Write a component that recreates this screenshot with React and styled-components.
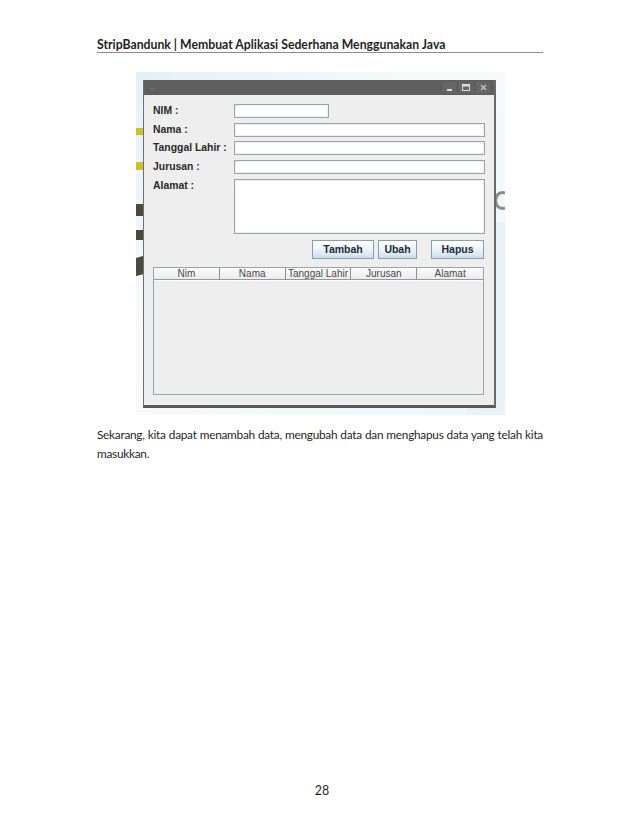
import React from 'react';
import styled, { createGlobalStyle } from 'styled-components';

const GlobalStyle = createGlobalStyle`
    html, body {
        margin: 0;
        padding: 0;
        background: #ffffff;
    }
`;

const PAGE = {
    header: 'StripBandunk | Membuat Aplikasi Sederhana Menggunakan Java',
    body: [
        'Sekarang, kita dapat menambah data, mengubah data dan menghapus data yang telah kita',
        'masukkan.',
    ],
    pageNumber: '28',
};

const FIELDS = [
    { label: 'NIM :', width: '95px' },
    { label: 'Nama :' },
    { label: 'Tanggal Lahir :' },
    { label: 'Jurusan :' },
];

const BUTTONS = [
    { label: 'Tambah', width: '62px', gap: '0' },
    { label: 'Ubah', width: '39px', gap: '4px' },
    { label: 'Hapus', width: '53px', gap: '14px' },
];

const COLUMNS = ['Nim', 'Nama', 'Tanggal Lahir', 'Jurusan', 'Alamat'];

export default function App() {
    return (
        <>
            <GlobalStyle />
            <Page>
                <Header>{PAGE.header}</Header>
                <Figure>
                    <Backdrop />
                    <Window>
                        <TitleBar>
                            <TitleGlyph>–</TitleGlyph>
                            <Controls>
                                <Control>
                                    <svg width="7" height="7" viewBox="0 0 7 7">
                                        <rect x="1" y="5" width="5" height="2" fill="#dcdcdc" />
                                    </svg>
                                </Control>
                                <Control>
                                    <svg width="8" height="7" viewBox="0 0 8 7">
                                        <rect x="0.5" y="0.5" width="7" height="6" fill="none" stroke="#dcdcdc" />
                                        <rect x="0" y="0" width="8" height="2.5" fill="#dcdcdc" />
                                    </svg>
                                </Control>
                                <Control>
                                    <svg width="7" height="7" viewBox="0 0 7 7">
                                        <path d="M1 1 L6 6 M6 1 L1 6" stroke="#c8c8c8" strokeWidth="1.2" />
                                    </svg>
                                </Control>
                            </Controls>
                        </TitleBar>
                        <WindowBody>
                            <Form>
                                {FIELDS.map(field => (
                                    <React.Fragment key={field.label}>
                                        <Label>{field.label}</Label>
                                        <Input $width={field.width} />
                                    </React.Fragment>
                                ))}
                                <Label>Alamat :</Label>
                                <TextArea />
                            </Form>
                            <ButtonRow>
                                {BUTTONS.map(button => (
                                    <Button key={button.label} $width={button.width} $gap={button.gap}>
                                        {button.label}
                                    </Button>
                                ))}
                            </ButtonRow>
                            <Table>
                                <HeaderRow>
                                    {COLUMNS.map(column => (
                                        <HeaderCell key={column}>{column}</HeaderCell>
                                    ))}
                                </HeaderRow>
                                <TableBody />
                            </Table>
                        </WindowBody>
                    </Window>
                </Figure>
                <Paragraph>
                    {PAGE.body.map((line, i) => (
                        <Line key={i} $justify={i < PAGE.body.length - 1}>{line}</Line>
                    ))}
                </Paragraph>
                <Footer>{PAGE.pageNumber}</Footer>
            </Page>
        </>
    );
}

// backdrop of the screenshot: bits of the desktop behind the window
const Backdrop = () => (
    <BackdropSvg viewBox="0 0 369 343" preserveAspectRatio="none">
        <defs>
            <linearGradient id="sky" x1="0" y1="0" x2="1" y2="1">
                <stop offset="0" stopColor="#e4f0f5" />
                <stop offset="0.4" stopColor="#f7fafb" />
                <stop offset="1" stopColor="#eef5f9" />
            </linearGradient>
        </defs>
        <rect width="369" height="343" fill="url(#sky)" />
        <rect x="330" y="150" width="39" height="193" fill="#e8f1f7" />
        <rect x="0" y="56" width="8" height="7" fill="#cfbf2e" />
        <rect x="0" y="90" width="8" height="8" fill="#cfbf2e" />
        <rect x="0" y="132" width="7" height="12" fill="#4b4a3c" />
        <rect x="0" y="158" width="8" height="10" fill="#4b4a3c" />
        <path d="M0 186 L7 184 L8 202 L0 204 Z" fill="#4b4a3c" />
        <path d="M370 121 A7 8 0 1 0 370 136" fill="none" stroke="#8a8a8a" strokeWidth="3" transform="translate(-1 0)" />
    </BackdropSvg>
);

const Page = styled.div`
    box-sizing: border-box;
    width: 638px;
    min-height: 826px;
    padding: 37px 95px 0 97px;
    display: flex;
    flex-direction: column;
    font-family: Lato, "Open Sans", sans-serif;
    color: #1f1f1f;
`;

const Header = styled.div`
    font-weight: 700;
    font-size: 12.25px;
    line-height: 15px;
    border-bottom: 1px solid #8c8c8c;
    height: 15px;
`;

const Figure = styled.div`
    position: relative;
    width: 369px;
    height: 343px;
    margin: 19px 0 0 39px;
    padding: 8px 9px 7px 7px;
    box-sizing: border-box;
`;

const BackdropSvg = styled.svg`
    position: absolute;
    inset: 0;
    width: 100%;
    height: 100%;
`;

const Window = styled.div`
    position: relative;
    height: 328px;
    box-sizing: border-box;
    background: #eeeeee;
    border-left: 1px solid #707070;
    border-right: 2px solid #6a6a6a;
    border-bottom: 3px solid #595959;
    display: flex;
    flex-direction: column;
    font-family: "Liberation Sans", Arial, sans-serif;
`;

const TitleBar = styled.div`
    height: 15px;
    flex: none;
    background: #5e5e5e;
    display: flex;
    align-items: center;
    justify-content: space-between;
    padding: 0 4px 0 6px;
`;

const TitleGlyph = styled.span`
    color: #8a8a8a;
    font-size: 8px;
    line-height: 1;
`;

const Controls = styled.div`
    display: flex;
    gap: 3px;
    height: 100%;
    align-items: center;
`;

const Control = styled.div`
    width: 14px;
    height: 11px;
    background: #666666;
    display: flex;
    align-items: center;
    justify-content: center;
`;

const WindowBody = styled.div`
    flex: 1;
    padding: 9px 10px 0 9px;
    display: flex;
    flex-direction: column;
`;

const Form = styled.div`
    display: grid;
    grid-template-columns: 81px 1fr;
    row-gap: 4.7px;
    align-items: center;
`;

const Label = styled.div`
    font-size: 10.4px;
    font-weight: 700;
    color: #2a2a2a;
    line-height: 14px;
    align-self: start;
`;

const Input = styled.div`
    box-sizing: border-box;
    height: 14px;
    width: ${({ $width }) => $width || '251px'};
    background: #ffffff;
    border: 1px solid #9aa3ad;
    box-shadow: inset 0 0 0 1px #eef1f4;
`;

const TextArea = styled(Input)`
    height: 55px;
`;

const ButtonRow = styled.div`
    display: flex;
    justify-content: flex-end;
    margin-top: 6px;
`;

const Button = styled.div`
    box-sizing: border-box;
    width: ${({ $width }) => $width};
    margin-left: ${({ $gap }) => $gap};
    height: 19px;
    border: 1px solid #8c9db3;
    background: linear-gradient(#ffffff 0%, #eef4fa 45%, #cfdfee 100%);
    display: flex;
    align-items: center;
    justify-content: center;
    font-size: 10.5px;
    font-weight: 700;
    color: #1d2b3a;
`;

const Table = styled.div`
    margin-top: 8px;
    width: 331px;
    height: 128px;
    box-sizing: border-box;
    border: 1px solid #9aa3ad;
    display: flex;
    flex-direction: column;
    background: #eeeeee;
`;

const HeaderRow = styled.div`
    display: grid;
    grid-template-columns: repeat(5, 1fr);
    height: 11px;
    border-bottom: 1px solid #8e9aa6;
    background: linear-gradient(#fbfbfb, #ececec);
`;

const HeaderCell = styled.div`
    font-size: 10px;
    line-height: 11px;
    text-align: center;
    color: #4a4a4a;
    border-right: 1px solid #8e8e8e;
    overflow: hidden;
    white-space: nowrap;

    &:last-child {
        border-right: none;
    }
`;

const TableBody = styled.div`
    flex: 1;
    border-top: 1px solid #ffffff;
`;

const Paragraph = styled.div`
    margin-top: 10px;
    font-size: 11.8px;
    line-height: 19px;
    letter-spacing: -0.25px;
    color: #1f1f1f;
`;

const Line = styled.div`
    text-align: ${({ $justify }) => ($justify ? 'justify' : 'left')};
    text-align-last: ${({ $justify }) => ($justify ? 'justify' : 'left')};
`;

const Footer = styled.div`
    margin-top: auto;
    padding-bottom: 27px;
    text-align: center;
    font-size: 12.4px;
    line-height: 16px;
    padding-left: 4px;
`;
